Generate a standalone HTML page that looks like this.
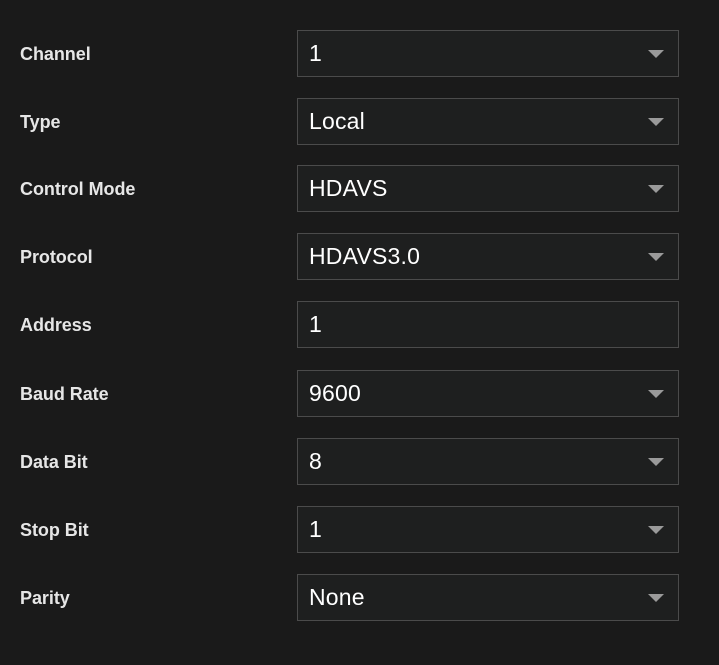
<!DOCTYPE html>
<html><head><style>
body{margin:0;width:719px;height:665px;background:#1a1a1a;font-family:"Liberation Sans",sans-serif;overflow:hidden;position:relative}
.l{position:absolute;left:20px;color:#e6e6e6;font-size:18px;letter-spacing:-0.05px;font-weight:bold;line-height:20px}
.b{position:absolute;left:297px;width:380px;height:45px;border:1px solid #4b4b4b;background:#1e1f1f;color:#fff;font-size:23px;line-height:45px;letter-spacing:0.2px}
.b span{position:absolute;left:11px}
.a{position:absolute;right:14px;top:19px;width:0;height:0;border-left:8px solid transparent;border-right:8px solid transparent;border-top:8px solid #9a9a9a}
</style></head><body>
<div class="l" style="top:44px">Channel</div><div class="b" style="top:30px"><span>1</span><i class="a"></i></div>
<div class="l" style="top:112px">Type</div><div class="b" style="top:98px"><span>Local</span><i class="a"></i></div>
<div class="l" style="top:179px">Control Mode</div><div class="b" style="top:165px"><span>HDAVS</span><i class="a"></i></div>
<div class="l" style="top:247px">Protocol</div><div class="b" style="top:233px"><span>HDAVS3.0</span><i class="a"></i></div>
<div class="l" style="top:315px">Address</div><div class="b" style="top:301px"><span>1</span></div>
<div class="l" style="top:384px">Baud Rate</div><div class="b" style="top:370px"><span>9600</span><i class="a"></i></div>
<div class="l" style="top:452px">Data Bit</div><div class="b" style="top:438px"><span>8</span><i class="a"></i></div>
<div class="l" style="top:520px">Stop Bit</div><div class="b" style="top:506px"><span>1</span><i class="a"></i></div>
<div class="l" style="top:588px">Parity</div><div class="b" style="top:574px"><span>None</span><i class="a"></i></div>
</body></html>
